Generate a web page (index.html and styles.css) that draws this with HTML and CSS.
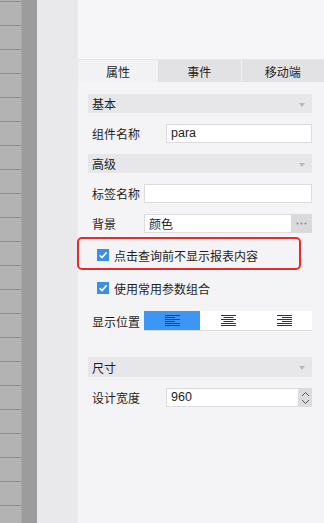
FILE: index.html
```html
<!DOCTYPE html>
<html lang="zh">
<head>
<meta charset="utf-8">
<link rel="stylesheet" href="styles.css">
</head>
<body>
<div class="app">
  <div class="ruler"></div>
  <div class="gutter"></div>
  <div class="canvas"></div>
  <div class="panel">
    <div class="panel-top"></div>
    <div class="tabs">
      <div class="tab active">属性</div>
      <div class="tab">事件</div>
      <div class="tab last">移动端</div>
    </div>
    <div class="body">
      <div class="head"><span>基本</span><i class="tri"></i></div>
      <div class="row">
        <span class="label wide">组件名称</span>
        <div class="input">para</div>
      </div>
      <div class="head"><span>高级</span><i class="tri"></i></div>
      <div class="row">
        <span class="label">标签名称</span>
        <div class="input"></div>
      </div>
      <div class="row">
        <span class="label">背景</span>
        <div class="input cjk">颜色</div>
        <div class="more"><svg width="11" height="3" viewBox="0 0 11 3"><circle cx="1.5" cy="1.5" r="1" fill="#888"/><circle cx="5.5" cy="1.5" r="1" fill="#888"/><circle cx="9.5" cy="1.5" r="1" fill="#888"/></svg></div>
      </div>
      <div class="check first">
        <svg class="cb" width="12" height="12" viewBox="0 0 12 12"><rect x="0" y="0" width="12" height="12" fill="#3b8ee8"/><path d="M2.6 6.2 L5 8.6 L9.6 3.4" stroke="#fff" stroke-width="1.6" fill="none"/></svg>
        <span>点击查询前不显示报表内容</span>
      </div>
      <div class="check">
        <svg class="cb" width="12" height="12" viewBox="0 0 12 12"><rect x="0" y="0" width="12" height="12" fill="#3b8ee8"/><path d="M2.6 6.2 L5 8.6 L9.6 3.4" stroke="#fff" stroke-width="1.6" fill="none"/></svg>
        <span>使用常用参数组合</span>
      </div>
      <div class="row seg-row">
        <span class="label">显示位置</span>
        <div class="seg">
          <div class="seg-item on">
            <svg width="15" height="11" viewBox="0 0 15 11"><g fill="#2a3d57"><rect x="0" y="0" width="15" height="1"/><rect x="0" y="2" width="10" height="1"/><rect x="0" y="4" width="15" height="1"/><rect x="0" y="6" width="10" height="1"/><rect x="0" y="8" width="15" height="1"/><rect x="0" y="10" width="15" height="1"/></g></svg>
          </div>
          <div class="seg-item">
            <svg width="15" height="11" viewBox="0 0 15 11"><g fill="#333"><rect x="0" y="0" width="15" height="1"/><rect x="2.5" y="2" width="10" height="1"/><rect x="0" y="4" width="15" height="1"/><rect x="2.5" y="6" width="10" height="1"/><rect x="0" y="8" width="15" height="1"/><rect x="0" y="10" width="15" height="1"/></g></svg>
          </div>
          <div class="seg-item">
            <svg width="15" height="11" viewBox="0 0 15 11"><g fill="#333"><rect x="0" y="0" width="15" height="1"/><rect x="5" y="2" width="10" height="1"/><rect x="0" y="4" width="15" height="1"/><rect x="5" y="6" width="10" height="1"/><rect x="0" y="8" width="15" height="1"/><rect x="0" y="10" width="15" height="1"/></g></svg>
          </div>
        </div>
      </div>
      <div class="head size"><span>尺寸</span><i class="tri"></i></div>
      <div class="row">
        <span class="label wide">设计宽度</span>
        <div class="input">960</div>
        <div class="spin"><svg width="9" height="16" viewBox="0 0 9 16"><path d="M1 6 L4.5 2.5 L8 6 M1 10 L4.5 13.5 L8 10" stroke="#555" stroke-width="1" fill="none"/></svg></div>
      </div>
    </div>
  </div>
  <div class="mark"></div>
</div>
</body>
</html>
```
FILE: styles.css
```css
* { box-sizing: border-box; }
html, body { margin: 0; padding: 0; }
body {
  width: 324px;
  height: 523px;
  overflow: hidden;
  font-family: "Noto Sans CJK SC", "Liberation Sans", sans-serif;
  font-size: 12px;
  color: #1e1e1e;
}
.app {
  position: relative;
  display: flex;
  height: 523px;
}
.ruler {
  width: 22px;
  background-color: #b3b3b3;
  background-image: repeating-linear-gradient(to bottom, #8e8e8e 0, #8e8e8e 1px, transparent 1px, transparent 24px);
  background-position: 0 1px;
  border-right: 1px solid #a8a8a8;
}
.gutter {
  width: 15px;
  background: #9c9c9c;
}
.canvas {
  width: 41px;
  background: #e9e9ec;
}
.panel {
  flex: 1;
  background: #f4f4f6;
  display: flex;
  flex-direction: column;
}
.panel-top {
  height: 59px;
  background: #f6f6f8;
}
.tabs {
  display: flex;
  height: 23px;
  border-top: 1px solid #e6e6e8;
}
.tab {
  flex: 1;
  display: flex;
  align-items: center;
  justify-content: center;
  background: #e2e2e4;
  font-size: 12px;
}
.tab.active { background: #f2f2f4; flex: 0 0 80px; }
.tab.last { border-left: 1px solid #f2f2f4; }
.body {
  padding: 12px 12px 0 10px;
  display: flex;
  flex-direction: column;
}
.head {
  height: 19px;
  background: #e7e7e9;
  display: flex;
  align-items: center;
  padding: 0 7px 0 4px;
  line-height: 19px;
  margin-top: 11px;
}
.head:first-child { margin-top: 0; }
.head span { flex: 1; }
.tri {
  width: 0; height: 0;
  border-left: 3.5px solid transparent;
  border-right: 3.5px solid transparent;
  border-top: 4px solid #b8b8ba;
  margin-top: 2px;
}
.head.size { margin-top: 26px; height: 20px; }
.row {
  display: flex;
  align-items: center;
  height: 19px;
  margin-top: 11px;
  padding-left: 4px;
}
.label { width: 52px; flex: none; }
.label.wide { width: 74px; }
.input {
  flex: 1;
  height: 19px;
  background: #fff;
  border: 1px solid #dcdcde;
  font-family: "Liberation Sans", "Noto Sans CJK SC", sans-serif;
  font-size: 12.5px;
  padding-left: 4px;
  line-height: 17px;
}
.input.cjk { font-family: "Noto Sans CJK SC", sans-serif; font-size: 12px; border-right: none; }
.more {
  width: 21px;
  height: 19px;
  background: #dadadc;
  display: flex;
  align-items: center;
  justify-content: center;
}
.spin {
  width: 13px;
  height: 19px;
  background: #dcdcde;
  display: flex;
  align-items: center;
  justify-content: center;
}
.check {
  display: flex;
  align-items: center;
  height: 20px;
  padding-left: 9px;
  margin-top: 13px;
}
.check.first { margin-top: 12px; }
.cb { margin-right: 5px; flex: none; }
.seg-row { margin-top: 13px; height: 20px; }
.seg {
  flex: 1;
  display: flex;
  height: 20px;
  background: #fff;
  border-bottom: 1px solid #dcdcde;
}
.seg-item {
  flex: 1;
  display: flex;
  align-items: center;
  justify-content: center;
}
.seg-item.on { background: #3d95f4; }
.mark {
  position: absolute;
  left: 77px;
  top: 237px;
  width: 224px;
  height: 33px;
  border: 2.5px solid #ea2a2a;
  border-radius: 5px;
}
```
